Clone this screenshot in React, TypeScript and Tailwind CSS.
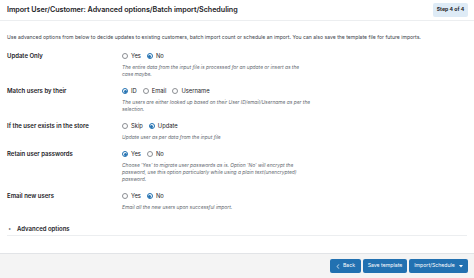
function Radio({ checked }: { checked?: boolean }) {
  return (
    <span
      className={
        "flex h-[6px] w-[6px] items-center justify-center rounded-full border-[0.8px] bg-white " +
        (checked ? "border-[#2271b1]" : "border-[#8c8f94]")
      }
    >
      {checked && <span className="h-[3px] w-[3px] rounded-full bg-[#2271b1]" />}
    </span>
  )
}

type Row = {
  label: string
  options: { text: string; checked?: boolean }[]
  desc: string[]
}

const rows: Row[] = [
  {
    label: "Update Only",
    options: [{ text: "Yes" }, { text: "No", checked: true }],
    desc: [
      "The entire data from the input file is processed for an update or insert as the",
      "case maybe.",
    ],
  },
  {
    label: "Match users by their",
    options: [{ text: "ID", checked: true }, { text: "Email" }, { text: "Username" }],
    desc: [
      "The users are either looked up based on their User ID/email/Username as per the",
      "selection.",
    ],
  },
  {
    label: "If the user exists in the store",
    options: [{ text: "Skip" }, { text: "Update", checked: true }],
    desc: ["Update user as per data from the input file"],
  },
  {
    label: "Retain user passwords",
    options: [{ text: "Yes", checked: true }, { text: "No" }],
    desc: [
      "Choose 'Yes' to migrate user passwords as is. Option 'No' will encrypt the",
      "password, use this option particularly while using a plain text(unencrypted)",
      "password.",
    ],
  },
  {
    label: "Email new users",
    options: [{ text: "Yes" }, { text: "No", checked: true }],
    desc: ["Email all the new users upon successful import."],
  },
]

export default function App() {
  return (
    <div className="flex h-[278px] w-[474px] flex-col overflow-hidden bg-white font-['Inter',sans-serif] text-[#1d2327]">
      <div className="flex h-[21px] shrink-0 items-center justify-between border-b border-[#eceef0] pl-[7px] pr-[6px]">
        <h2 className="text-[7.2px] font-semibold tracking-[-0.05px]">
          Import User/Customer: Advanced options/Batch import/Scheduling
        </h2>
        <span className="flex h-[14px] w-[35px] items-center justify-center rounded-[2px] bg-[#deebf6] text-[5.2px] font-bold text-[#1d2327]">
          Step 4 of 4
        </span>
      </div>

      <p className="mt-[12px] h-[8px] pl-[7px] text-[5.1px] leading-[8px] text-[#3c434a]">
        Use advanced options from below to decide updates to existing customers, batch import count or schedule an import. You can also save the template file for future imports.
      </p>

      <div className="mt-[10px] flex flex-col gap-[8px] px-[7px]">
        {rows.map((r) => (
          <div key={r.label} className="flex">
            <div className="h-[10px] w-[115px] text-[6px] font-semibold leading-[10px]">{r.label}</div>
            <div className="flex flex-col">
              <div className="flex h-[10px] items-center gap-[6px]">
                {r.options.map((o) => (
                  <label key={o.text} className="flex items-center gap-[3px] text-[5.8px]">
                    <Radio checked={o.checked} />
                    <span>{o.text}</span>
                  </label>
                ))}
              </div>
              <div className="mt-[3px] flex flex-col text-[4.9px] italic leading-[7px] text-[#646970]">
                {r.desc.map((d) => (
                  <span key={d}>{d}</span>
                ))}
              </div>
            </div>
          </div>
        ))}
      </div>

      <div className="mx-[7px] mt-[13px] flex h-[12px] items-center gap-[6px] border-b border-[#eceef0] pb-[2px] pl-[2px]">
        <span className="text-[4px] text-[#50575e]">▸</span>
        <span className="text-[6px] font-semibold">Advanced options</span>
      </div>

      <div className="mt-[17px] flex flex-1 items-start justify-end gap-[2px] border-t border-[#e2e4e7] bg-[#f4f4f4] pr-[6px] pt-[5px]">
        <button className="flex h-[14px] w-[31px] items-center justify-center gap-[3px] rounded-[2px] bg-[#2271b1] text-[5.2px] text-white">
          <svg width="4" height="5" viewBox="0 0 4 6" fill="none" stroke="white" strokeWidth="0.9">
            <path d="M3 0.5 L1 3 L3 5.5" />
          </svg>
          Back
        </button>
        <button className="flex h-[14px] w-[44px] items-center justify-center rounded-[2px] bg-[#2271b1] text-[5.2px] text-white">
          Save template
        </button>
        <button className="flex h-[14px] w-[59px] items-center justify-center gap-[4px] rounded-[2px] bg-[#2271b1] text-[5.2px] text-white">
          Import/Schedule
          <svg width="4" height="3" viewBox="0 0 4 3" fill="white">
            <path d="M0 0 H4 L2 2.5 Z" />
          </svg>
        </button>
      </div>
    </div>
  )
}
